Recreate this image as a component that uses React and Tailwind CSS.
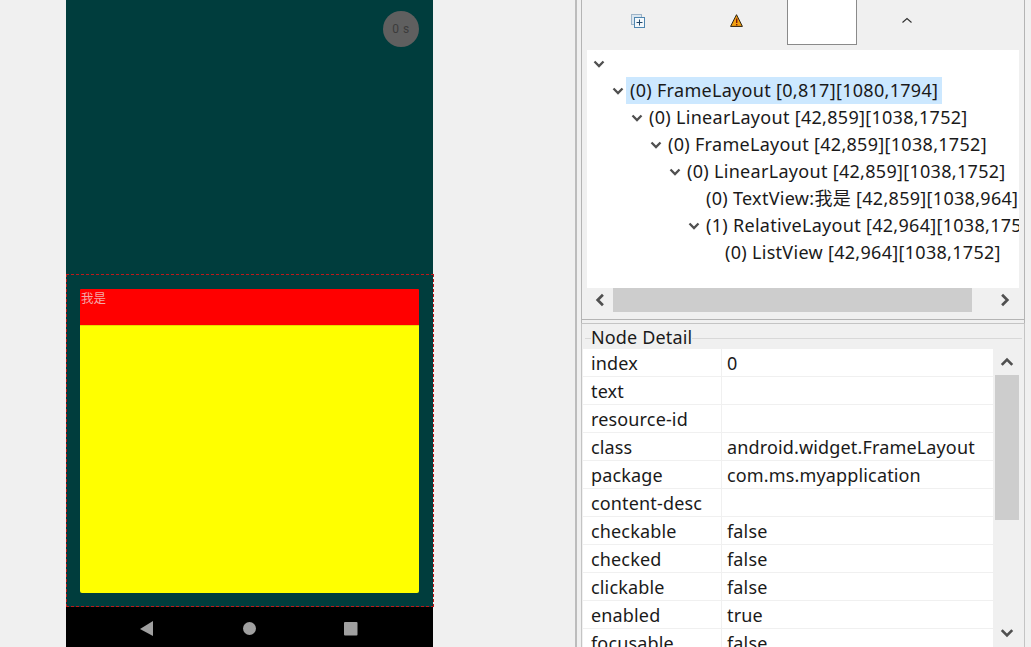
const FONT = 'font-["Noto_Sans","Noto_Sans_CJK_SC",sans-serif]';

const Chevron = ({ dir = "down", size = 12, className = "" }) => {
  const d = {
    down: "M1.5 3.5 L6 8 L10.5 3.5",
    up: "M1.5 8.5 L6 4 L10.5 8.5",
    left: "M8.5 1.5 L4 6 L8.5 10.5",
    right: "M3.5 1.5 L8 6 L3.5 10.5",
  }[dir];
  return (
    <svg width={size} height={size} viewBox="0 0 12 12" className={className}>
      <path d={d} fill="none" stroke="#505050" strokeWidth="2.3" />
    </svg>
  );
};

const treeRows = [
  { pad: "pl-[4px]", text: "", arrow: true },
  { pad: "pl-[23px]", text: "(0) FrameLayout [0,817][1080,1794]", arrow: true, selected: true },
  { pad: "pl-[42px]", text: "(0) LinearLayout [42,859][1038,1752]", arrow: true },
  { pad: "pl-[61px]", text: "(0) FrameLayout [42,859][1038,1752]", arrow: true },
  { pad: "pl-[80px]", text: "(0) LinearLayout [42,859][1038,1752]", arrow: true },
  { pad: "pl-[99px]", text: "(0) TextView:我是 [42,859][1038,964]", arrow: false },
  { pad: "pl-[99px]", text: "(1) RelativeLayout [42,964][1038,1752]", arrow: true },
  { pad: "pl-[118px]", text: "(0) ListView [42,964][1038,1752]", arrow: false },
];

const details = [
  ["index", "0"],
  ["text", ""],
  ["resource-id", ""],
  ["class", "android.widget.FrameLayout"],
  ["package", "com.ms.myapplication"],
  ["content-desc", ""],
  ["checkable", "false"],
  ["checked", "false"],
  ["clickable", "false"],
  ["enabled", "true"],
  ["focusable", "false"],
];

function Phone() {
  return (
    <div className="w-[367px] h-[647px] flex flex-col bg-[#003d3d] shrink-0">
      <div className="h-[274px] flex justify-end items-start pt-[11px] pr-[14px] shrink-0">
        <div className="w-[36px] h-[36px] rounded-full bg-[#5f5f5f] flex items-center justify-center text-[12px] tracking-[0.5px] text-[#3c3c3c] font-['Roboto',sans-serif]">
          0 s
        </div>
      </div>
      <div className="h-[333px] shrink-0 w-[368px] border border-dashed border-[#c01818] pl-[13px] pr-[14px] pt-[14px] pb-[13px] flex flex-col">
        <div className="h-[36px] bg-[#ff0000] text-[12.5px] leading-[19px] pl-[1px] text-[#f3a8a8] shrink-0 rounded-t-[1px]">我是</div>
        <div className="flex-1 bg-[#ffff00] border-t border-[#e8d800] rounded-b-[2px]"></div>
      </div>
      <div className="flex-1 bg-black flex items-center">
        <svg width="367" height="40" viewBox="0 0 367 40">
          <polygon points="74,22 87,14 87,29" fill="#a0a0a0" />
          <circle cx="183.5" cy="21.5" r="6.5" fill="#a0a0a0" />
          <rect x="278" y="15" width="13.5" height="13.5" rx="1" fill="#a0a0a0" />
        </svg>
      </div>
    </div>
  );
}

function Toolbar() {
  return (
    <div className="h-[45px] flex items-start shrink-0 pl-[49px]">
      <svg width="14" height="14" viewBox="0 0 14 14" className="mt-[14px] shrink-0">
        <rect x="0.5" y="0.5" width="10" height="10" fill="#dbe6ef" stroke="#9db4c8" />
        <rect x="3.5" y="3.5" width="10" height="10" fill="#f4f8fb" stroke="#4f86b0" />
        <path d="M8.5 5.5v6M5.5 8.5h6" stroke="#234a6c" strokeWidth="1" />
      </svg>
      <svg width="13" height="13" viewBox="0 0 13 13" className="mt-[14px] ml-[85px] shrink-0">
        <polygon points="6.5,0.7 12.4,12.4 0.6,12.4" fill="#f2a010" stroke="#2a2010" strokeWidth="1" />
        <rect x="6" y="4.5" width="1.4" height="4.5" fill="#801808" />
        <rect x="6" y="10" width="1.4" height="1.4" fill="#801808" />
      </svg>
      <div className="w-[70px] h-[45px] bg-white border border-t-0 border-[#8a8a8a] shrink-0 ml-[44px]"></div>
      <svg width="12" height="12" viewBox="0 0 12 12" className="mt-[15px] ml-[44px] shrink-0">
        <path d="M1.5 7.5 L6 3.5 L10.5 7.5" fill="none" stroke="#303030" strokeWidth="1.1" />
      </svg>
    </div>
  );
}

function Tree() {
  return (
    <div className="mt-[5px] ml-[5px] h-[269px] flex flex-col shrink-0">
      <div className="h-[238px] bg-white overflow-hidden shrink-0 w-[432px]">
        {treeRows.map((r, i) => (
          <div key={i} className={`h-[27px] flex items-center whitespace-nowrap ${r.pad}`}>
            <span className="w-[15px] flex justify-center shrink-0">{r.arrow && <Chevron />}</span>
            <span className={`ml-[1px] pl-[4px] pr-[4px] h-[27px] leading-[26px] text-[18px] tracking-[0.3px] text-[#1a1a1a] ${r.selected ? "bg-[#cce8ff]" : ""}`}>{r.text}</span>
          </div>
        ))}
      </div>
      <div className="h-[24px] flex items-center w-[432px] shrink-0">
        <span className="w-[26px] flex justify-center shrink-0"><Chevron dir="left" size={14} /></span>
        <div className="w-[359px] h-[24px] bg-[#cdcdcd] shrink-0"></div>
        <span className="flex-1 flex justify-center pl-[18px]"><Chevron dir="right" size={14} /></span>
      </div>
    </div>
  );
}

function NodeDetail() {
  return (
    <div className="mt-[3px] -ml-[1px] -mr-[1px] flex-1 border border-b-0 border-[#c4c4c4] relative min-h-0">
      <div className="absolute left-[3px] right-[2px] top-[14px] border-t border-[#d8d8d8]"></div>
      <div className="relative h-[25px] pl-[9px] text-[18px] leading-[26px] tracking-[0.15px] text-[#1a1a1a]">
        <span className="bg-[#f0f0f0]">Node Detail</span>
      </div>
      <div className="flex ml-[1px] h-[298px] overflow-hidden">
        <div className="w-[410px] bg-white shrink-0 h-[298px] overflow-hidden">
          {details.map(([k, v]) => (
            <div key={k} className="h-[28px] flex border-b border-[#f0f0f0] text-[18px] leading-[28px] tracking-[0.15px] text-[#1a1a1a]">
              <div className="w-[139px] pl-[8px] border-r border-[#f0f0f0] shrink-0">{k}</div>
              <div className="pl-[5px]">{v}</div>
            </div>
          ))}
        </div>
        <div className="ml-[2px] w-[24px] h-[298px] flex flex-col items-center shrink-0">
          <span className="h-[26px] flex items-center"><Chevron dir="up" size={14} /></span>
          <div className="w-[24px] h-[145px] bg-[#cdcdcd] shrink-0"></div>
          <span className="flex-1 flex items-end pb-[7px]"><Chevron dir="down" size={14} /></span>
        </div>
      </div>
    </div>
  );
}

export default function App() {
  return (
    <div className={`w-[1031px] h-[647px] overflow-hidden bg-[#f0f0f0] flex ${FONT}`}>
      <div className="w-[66px] shrink-0"></div>
      <Phone />
      <div className="w-[142px] shrink-0"></div>
      <div className="w-[6px] shrink-0 border-l-2 border-[#bcbcbc]"></div>
      <div className="w-[444px] shrink-0 flex flex-col border-x border-[#b4b4b4] h-[647px]">
        <Toolbar />
        <Tree />
        <div className="h-[1px] bg-[#b4b4b4] shrink-0"></div>
        <NodeDetail />
      </div>
    </div>
  );
}
